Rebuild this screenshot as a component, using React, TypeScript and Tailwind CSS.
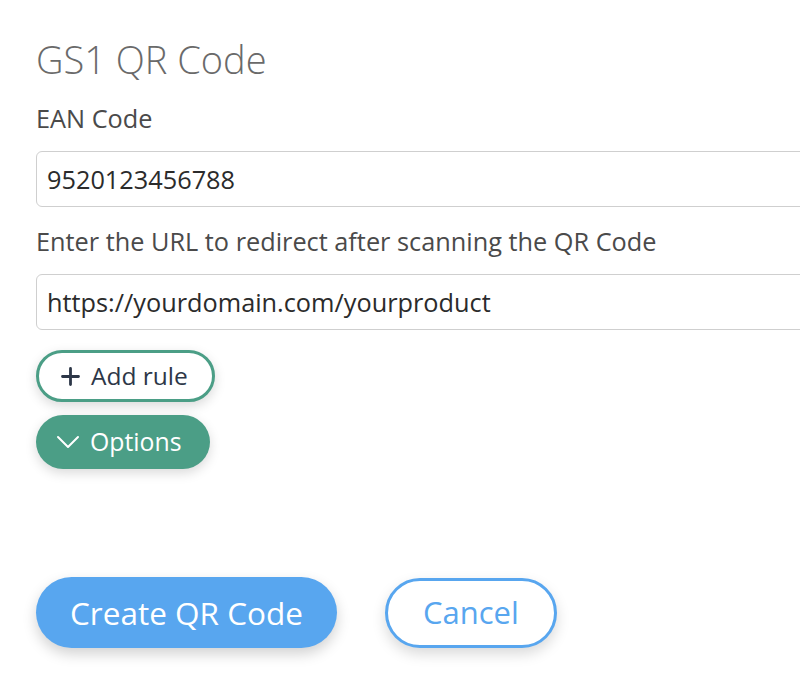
function Field({ label, value }: { label: string; value: string }) {
  return (
    <div className="flex flex-col">
      <label className="text-[25.3px] leading-[35px] text-[#4a4a4a]">{label}</label>
      <input
        readOnly
        value={value}
        className="mt-[15px] h-[56px] w-[800px] rounded-[6px] border border-[#cfcfcf] bg-white px-[10px] text-[25.3px] text-[#2b2b2b] outline-none"
      />
    </div>
  )
}

export default function App() {
  return (
    <div
      className="h-[692px] w-full overflow-hidden bg-white pl-[36px]"
      style={{ fontFamily: '"Open Sans", sans-serif' }}
    >
      <h1 className="pt-[33px] text-[38px] font-light leading-[52px] text-[#6a6a6a]">GS1 QR Code</h1>
      <div className="mt-[16px] flex flex-col gap-[17px]">
        <Field label="EAN Code" value="9520123456788" />
        <Field label="Enter the URL to redirect after scanning the QR Code" value="https://yourdomain.com/yourproduct" />
      </div>
      <div className="mt-[20px] flex flex-col items-start gap-[13px]">
        <button className="flex h-[52px] items-center gap-[11px] rounded-full border-[3px] border-[#4b9e86] bg-white pl-[22px] pr-[24px] text-[24.5px] text-[#2d3748] shadow-[0_4px_12px_rgba(0,0,0,0.15)]">
          <svg width="19" height="19" viewBox="0 0 19 19" fill="none" stroke="currentColor" strokeWidth="2.8" strokeLinecap="round">
            <path d="M9.5 1.5v16M1.5 9.5h16" />
          </svg>
          Add rule
        </button>
        <button className="flex h-[54px] items-center gap-[10px] rounded-full bg-[#4b9e86] pl-[20px] pr-[28px] text-[24.8px] text-white shadow-[0_4px_12px_rgba(0,0,0,0.15)]">
          <svg width="24" height="14" viewBox="0 0 24 14" fill="none" stroke="currentColor" strokeWidth="2" strokeLinecap="round" strokeLinejoin="round">
            <path d="M2 2l10 10L22 2" />
          </svg>
          Options
        </button>
      </div>
      <div className="mt-[108px] flex items-center gap-[48px]">
        <button className="h-[71px] rounded-full bg-[#58a6ef] px-[34px] text-[31.5px] text-white shadow-[0_6px_14px_rgba(0,0,0,0.18)]">
          Create QR Code
        </button>
        <button className="h-[70px] rounded-full border-[3px] border-[#58a6ef] bg-white px-[35px] text-[31px] text-[#58a6ef] shadow-[0_6px_14px_rgba(0,0,0,0.15)]">
          Cancel
        </button>
      </div>
    </div>
  )
}
